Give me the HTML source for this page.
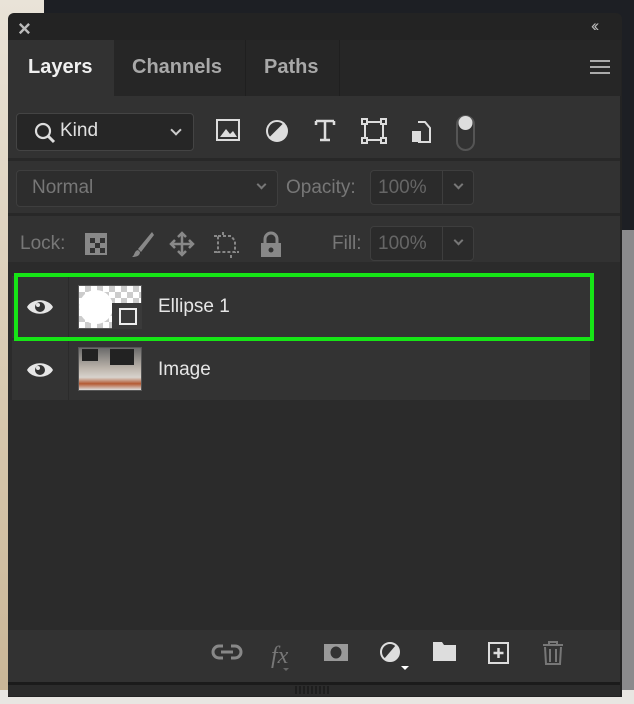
<!DOCTYPE html>
<html><head><style>
*{margin:0;padding:0;box-sizing:border-box}
body{width:634px;height:704px;overflow:hidden;position:relative;background:#1d1f24;font-family:"Liberation Sans",sans-serif}
.a{position:absolute}
.t{color:#c8c8c8;font-size:19px}
</style></head><body>
<div class="a" style="left:0;top:0;width:44px;height:704px;background:linear-gradient(#e9e3d8,#d7c7ad 60%,#c9b596)"></div>
<div class="a" style="left:612px;top:230px;width:22px;height:474px;background:#8a8a8c"></div>
<div class="a" style="left:0;top:690px;width:634px;height:14px;background:#e8e6e2"></div>
<div class="a" style="left:8px;top:13px;width:614px;height:684px;background:#232323;border-radius:6px 6px 0 0"></div>
<!-- title -->
<div class="a" style="left:18px;top:16px;color:#bbb;font-size:22px;font-weight:bold">×</div>
<div class="a" style="left:591px;top:16px;color:#bbb;font-size:17px;letter-spacing:-3px">‹‹</div>
<!-- tabs -->
<div class="a" style="left:8px;top:40px;width:613px;height:56px;background:#262626"></div>
<div class="a" style="left:8px;top:40px;width:106px;height:56px;background:#323232"></div>
<div class="a" style="left:245px;top:40px;width:1px;height:56px;background:#1f1f1f"></div>
<div class="a" style="left:339px;top:40px;width:1px;height:56px;background:#1f1f1f"></div>
<div class="a t" style="left:28px;top:56px;color:#f0f0f0;font-weight:bold;font-size:20px">Layers</div>
<div class="a t" style="left:132px;top:56px;color:#a8a8a8;font-weight:bold;font-size:20px">Channels</div>
<div class="a t" style="left:264px;top:56px;color:#a8a8a8;font-weight:bold;font-size:20px">Paths</div>
<div class="a" style="left:590px;top:60px;width:20px;height:14px;border-top:2px solid #aaa;border-bottom:2px solid #aaa"></div>
<div class="a" style="left:590px;top:66px;width:20px;height:2px;background:#aaa"></div>
<!-- filter row -->
<div class="a" style="left:8px;top:96px;width:612px;height:62px;background:#323232"></div>
<div class="a" style="left:16px;top:113px;width:178px;height:38px;border:1px solid #444;border-radius:4px;background:#262626"></div>
<svg class="a" style="left:33px;top:121px" width="26" height="26"><circle cx="10" cy="10" r="7" stroke="#ddd" stroke-width="2.2" fill="none"/><line x1="15" y1="15" x2="21" y2="21" stroke="#ddd" stroke-width="3"/></svg>
<div class="a t" style="left:60px;top:120px;color:#e0e0e0">Kind</div>
<div class="a" style="left:172px;top:126px;width:8px;height:8px;border-right:2px solid #ccc;border-bottom:2px solid #ccc;transform:rotate(45deg)"></div>
<svg class="a" style="left:214px;top:114px" width="270" height="40" fill="none" stroke="#ddd" stroke-width="2">
<rect x="3" y="6" width="22" height="20"/><path d="M6 23l6-8 4 5 3-3 4 6z" fill="#ddd" stroke="none"/>
<circle cx="63" cy="17" r="10"/><path d="M70 10L56 24A10 10 0 0 0 70 10z" fill="#ddd"/>
<path d="M102 7h18M111 7v19M106 26h10M102 7v4M120 7v4" stroke-width="2.5"/>
<rect x="151" y="8" width="18" height="18"/><rect x="148" y="5" width="5" height="5" fill="#323232"/><rect x="167" y="5" width="5" height="5" fill="#323232"/><rect x="148" y="24" width="5" height="5" fill="#323232"/><rect x="167" y="24" width="5" height="5" fill="#323232"/>
<path d="M204 8h7l5 6v14h-12" /><rect x="198" y="17" width="9" height="11" fill="#ddd" stroke="none"/>
<rect x="243" y="2" width="17" height="34" rx="8.5" stroke="#555"/><circle cx="251.5" cy="9" r="7" fill="#ddd" stroke="none"/>
</svg>
<div class="a" style="left:8px;top:158px;width:612px;height:3px;background:#282828"></div>
<!-- blend row -->
<div class="a" style="left:8px;top:161px;width:612px;height:52px;background:#323232"></div>
<div class="a" style="left:16px;top:170px;width:262px;height:37px;border:1px solid #3e3e3e;border-radius:4px;background:#2d2d2d"></div>
<div class="a t" style="left:32px;top:177px;color:#777">Normal</div>
<div class="a" style="left:258px;top:181px;width:7px;height:7px;border-right:2px solid #777;border-bottom:2px solid #777;transform:rotate(45deg)"></div>
<div class="a t" style="left:286px;top:177px;color:#777">Opacity:</div>
<div class="a" style="left:370px;top:170px;width:104px;height:35px;border:1px solid #3e3e3e;border-radius:4px;background:#2b2b2b"></div>
<div class="a" style="left:442px;top:171px;width:1px;height:33px;background:#3e3e3e"></div>
<div class="a t" style="left:378px;top:177px;color:#666">100%</div>
<div class="a" style="left:455px;top:181px;width:7px;height:7px;border-right:2px solid #777;border-bottom:2px solid #777;transform:rotate(45deg)"></div>
<div class="a" style="left:8px;top:213px;width:612px;height:3px;background:#282828"></div>
<div class="a" style="left:8px;top:216px;width:612px;height:46px;background:#323232"></div>
<div class="a" style="left:370px;top:226px;width:104px;height:35px;border:1px solid #3e3e3e;border-radius:4px;background:#2b2b2b"></div>
<div class="a t" style="left:20px;top:233px;color:#777">Lock:</div>
<svg class="a" style="left:84px;top:230px" width="210" height="30">
<rect x="1" y="3" width="22" height="22" fill="#888"/><g fill="#323232"><rect x="6" y="8" width="5" height="5"/><rect x="16" y="8" width="5" height="5"/><rect x="11" y="13" width="5" height="5"/><rect x="6" y="18" width="5" height="5"/><rect x="16" y="18" width="5" height="5"/></g>
<path d="M68 2L54 19l3 3L70 5z M54 20c-4 1-3 5-6 7 4 0 8-1 8-5z" fill="#888"/>
<path d="M98 3v22M87 14h22M94 7l4-4 4 4M94 21l4 4 4-4M91 10l-4 4 4 4M105 10l4 4-4 4" stroke="#888" stroke-width="2.5" fill="none"/>
<path d="M134 6h13l4 5v11h-17zM130 6h3M130 22h3M153 22h2M139 2v3M147 25v3" stroke="#888" stroke-width="2" fill="none" stroke-dasharray="3 2"/>
<path d="M181 13v-4a6 6 0 0 1 12 0v4" stroke="#888" stroke-width="3" fill="none"/><rect x="177" y="13" width="20" height="14" fill="#888"/><circle cx="187" cy="20" r="2.5" fill="#323232"/>
</svg>
<div class="a t" style="left:332px;top:233px;color:#777">Fill:</div>
<div class="a" style="left:442px;top:227px;width:1px;height:33px;background:#3e3e3e"></div>
<div class="a t" style="left:378px;top:233px;color:#666">100%</div>
<div class="a" style="left:455px;top:237px;width:7px;height:7px;border-right:2px solid #777;border-bottom:2px solid #777;transform:rotate(45deg)"></div>
<!-- list -->
<div class="a" style="left:8px;top:262px;width:612px;height:368px;background:#2b2b2b"></div>
<div class="a" style="left:12px;top:276px;width:578px;height:124px;background:#333"></div>
<div class="a" style="left:68px;top:276px;width:1px;height:124px;background:#2b2b2b"></div>
<div class="a" style="left:12px;top:338px;width:578px;height:2px;background:#2b2b2b"></div>
<div class="a" style="left:14px;top:273px;width:580px;height:68px;border:4px solid #16e516"></div>
<svg class="a" style="left:26px;top:296px" width="28" height="90"><g fill="#e6e6e6"><path d="M1 11C6 2 22 2 27 11 22 20 6 20 1 11z"/><path d="M1 74C6 65 22 65 27 74 22 83 6 83 1 74z"/></g><circle cx="14" cy="11" r="5" fill="#333"/><circle cx="14" cy="74" r="5" fill="#333"/><circle cx="12" cy="9" r="2" fill="#e6e6e6"/><circle cx="12" cy="72" r="2" fill="#e6e6e6"/></svg>
<div class="a" style="left:78px;top:285px;width:64px;height:44px;border:1px solid #555;background:repeating-conic-gradient(#ccc 0 25%,#fff 0 50%) 0 0/12px 12px"></div>
<div class="a" style="left:79px;top:290px;width:34px;height:34px;background:#fff;border-radius:50%"></div>
<div class="a" style="left:112px;top:303px;width:30px;height:26px;background:#3a3a3a"></div>
<div class="a" style="left:119px;top:308px;width:18px;height:17px;border:2px solid #eee"></div>
<div class="a t" style="left:158px;top:296px;color:#e6e6e6">Ellipse 1</div>
<div class="a" style="left:78px;top:347px;width:64px;height:44px;border:1px solid #555;background:linear-gradient(#6a6a6a,#bfb7ae 50%,#d8d3cd 70%,#b45a34 85%,#ddd)"></div>
<div class="a" style="left:82px;top:349px;width:16px;height:12px;background:#222"></div>
<div class="a" style="left:110px;top:349px;width:24px;height:16px;background:#222"></div>
<div class="a t" style="left:158px;top:359px;color:#e6e6e6">Image</div>
<!-- bottom bar -->
<div class="a" style="left:8px;top:630px;width:612px;height:52px;background:#323232"></div>
<div class="a" style="left:8px;top:682px;width:612px;height:3px;background:#1b1b1b"></div>
<div class="a" style="left:8px;top:685px;width:612px;height:11px;background:#2b2b2b"></div>
<div class="a" style="left:295px;top:686px;width:36px;height:8px;background:repeating-linear-gradient(90deg,#1e1e1e 0 2px,transparent 2px 4px)"></div>
<svg class="a" style="left:210px;top:638px" width="370" height="36">
<path d="M13 8h-4a6 6 0 0 0 0 12h4M21 8h4a6 6 0 0 1 0 12h-4M11 14h12" stroke="#888" stroke-width="3" fill="none"/>
<text x="61" y="25" font-family="Liberation Serif" font-style="italic" font-size="24" fill="#777">fx</text><path d="M73 30h6l-3 3z" fill="#666"/>
<rect x="114" y="6" width="24" height="17" fill="#999"/><ellipse cx="126" cy="14.5" rx="5.5" ry="6" fill="#323232"/>
<circle cx="180" cy="14" r="9" stroke="#ddd" stroke-width="2" fill="none"/><path d="M186 7L174 21A9 9 0 0 0 186 7z" fill="#ddd"/><path d="M191 28h8l-4 4z" fill="#fff"/>
<path d="M223 4h9l2 3h12v16h-23z" fill="#ddd"/>
<rect x="279" y="5" width="19" height="20" stroke="#ddd" stroke-width="2" fill="none"/><path d="M288.5 10v10M283.5 15h10" stroke="#ddd" stroke-width="2.5"/>
<path d="M333 7h20M339 7v-3h8v3M335 9l1 17h14l1-17M340 11v13M346 11v13" stroke="#777" stroke-width="2" fill="none"/>
</svg>
</body></html>
